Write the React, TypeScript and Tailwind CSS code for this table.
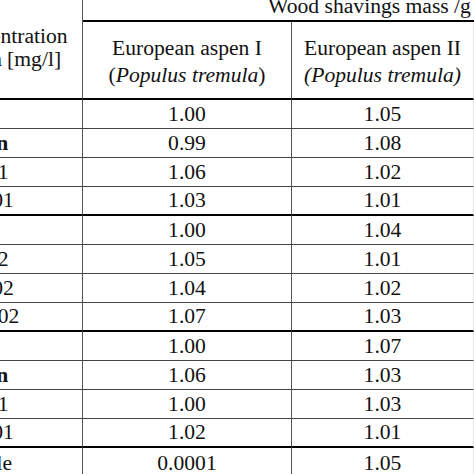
import React from "react";

type Row = { label: string; bold?: boolean; a: string; b: string; c: string };

const groups: Row[][] = [
  [
    { label: "0", a: "1.00", b: "1.05", c: "1.03" },
    { label: "Zn", bold: true, a: "0.99", b: "1.08", c: "1.04" },
    { label: "0.1", a: "1.06", b: "1.02", c: "1.01" },
    { label: "0.01", a: "1.03", b: "1.01", c: "1.02" },
  ],
  [
    { label: "0", a: "1.00", b: "1.04", c: "1.02" },
    { label: "0.2", a: "1.05", b: "1.01", c: "1.00" },
    { label: "0.02", a: "1.04", b: "1.02", c: "1.03" },
    { label: "0.002", a: "1.07", b: "1.03", c: "1.01" },
  ],
  [
    { label: "0", a: "1.00", b: "1.07", c: "1.04" },
    { label: "Zn", bold: true, a: "1.06", b: "1.03", c: "1.02" },
    { label: "0.1", a: "1.00", b: "1.03", c: "1.05" },
    { label: "0.01", a: "1.02", b: "1.01", c: "1.00" },
  ],
];

export default function App() {
  return (
    <div
      className="w-[474px] h-[474px] overflow-hidden bg-white text-[#111]"
      style={{ fontFamily: '"Liberation Serif", "Times New Roman", serif' }}
    >
      <table className="table-fixed border-separate border-spacing-0 w-[725px] ml-[-69px] mt-[-7px] text-[21.6px]">
        <colgroup>
          <col className="w-[152px]" />
          <col className="w-[209px]" />
          <col className="w-[182px]" />
          <col className="w-[182px]" />
        </colgroup>
        <thead>
          <tr>
            <th
              rowSpan={2}
              className="align-top p-0 pt-[32px] font-normal leading-[23px] text-center border-r border-r-[#555] border-b-2 border-b-black"
            >
              Concentration
              <br />
              of <b>Zn</b> [mg/l]
            </th>
            <th
              colSpan={3}
              className="font-normal leading-[27px] h-[28px] p-0 text-center border-b-2 border-b-black"
            >
              Wood shavings mass /g
            </th>
          </tr>
          <tr>
            <th className="font-normal leading-[27px] p-0 pt-[13px] pb-[9px] text-center border-r border-r-[#555] border-b-2 border-b-black">
              European aspen I
              <br />
              (<i>Populus tremula</i>)
            </th>
            <th className="font-normal leading-[27px] p-0 pt-[13px] pb-[9px] text-center border-r border-r-[#e8e8e8] border-b-2 border-b-black">
              European aspen II
              <br />
              <i>(Populus tremula)</i>
            </th>
            <th className="font-normal leading-[27px] p-0 pt-[13px] pb-[9px] text-center border-b-2 border-b-black whitespace-nowrap">
              White poplar
              <br />
              <i>(Populus alba)</i>
            </th>
          </tr>
        </thead>
        <tbody>
          {groups.map((g, gi) =>
            g.map((r, ri) => {
              const last = ri === g.length - 1;
              const line = last
                ? "border-b-2 border-b-black h-[29px] leading-[27px]"
                : "border-b border-b-[#444] h-[29px] leading-[28px]";
              return (
                <tr key={`${gi}-${ri}`}>
                  <td className={`text-right p-0 pr-[47px] ${line} border-r border-r-[#555]`}>
                    <span className={`inline-block w-[80px] text-center ${r.bold ? "font-bold" : ""}`}>
                      {r.label}
                    </span>
                  </td>
                  <td className={`text-center p-0 ${line} border-r border-r-[#555]`}>{r.a}</td>
                  <td className={`text-center p-0 ${line} border-r border-r-[#e8e8e8]`}>{r.b}</td>
                  <td className={`text-center p-0 ${line}`}>{r.c}</td>
                </tr>
              );
            })
          )}
          <tr>
            <td className="text-right p-0 pr-[70px] h-[29px] leading-[28px] border-r border-r-[#555] whitespace-nowrap">
              Sample
            </td>
            <td className="text-center p-0 h-[29px] leading-[28px] border-r border-r-[#555]">0.0001</td>
            <td className="text-center p-0 h-[29px] leading-[28px] border-r border-r-[#e8e8e8]">1.05</td>
            <td className="text-center p-0 h-[29px] leading-[28px]">0.0003</td>
          </tr>
        </tbody>
      </table>
    </div>
  );
}
